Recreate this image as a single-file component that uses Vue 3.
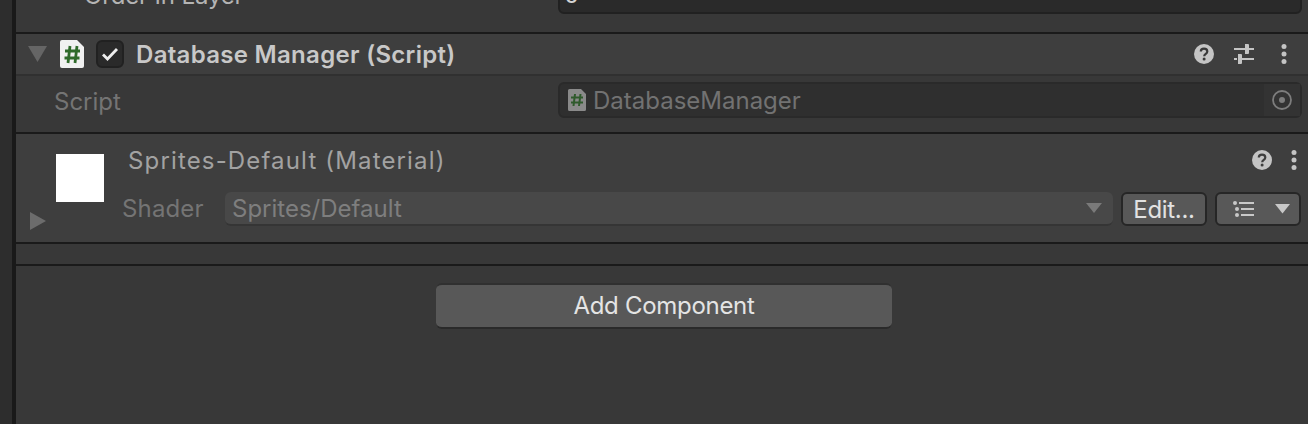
<template>
  <div class="inspector">
    <div class="gutter"></div>
    <div class="panel">
      <div class="clipped-row">
        <span class="clipped-label">Order In Layer</span>
        <div class="clipped-field"><span>0</span></div>
      </div>

      <div class="comp-header">
        <svg class="fold" width="20" height="18" viewBox="0 0 20 18"><path d="M0 1h19L9.500 17z" fill="#656565" /></svg>
        <svg class="script-icon" width="24" height="28" viewBox="0 0 24 28">
          <path d="M2 0h15l7 7v19a2 2 0 0 1-2 2H2a2 2 0 0 1-2-2V2a2 2 0 0 1 2-2z" fill="#f1f1f1" />
          <path d="M10 6 8 23M17 6l-2 17M5 11h15M4.500 18h15" stroke="#2f6a2a" stroke-width="2.800" fill="none" />
        </svg>
        <div class="check">
          <svg width="18" height="14" viewBox="0 0 18 14"><path d="M2 7.500 6.500 12 16 2" stroke="#eee" stroke-width="2.800" fill="none" /></svg>
        </div>
        <span class="comp-title">Database Manager (Script)</span>
        <div class="head-icons">
          <svg width="20" height="20" viewBox="0 0 20 20">
            <circle cx="10" cy="10" r="10" fill="#c4c4c4" />
            <path d="M6.800 7.600C6.800 5.800 8.200 4.700 10 4.700s3.300 1 3.300 2.800c0 2.300-3.100 2.300-3.100 4.700" stroke="#383838" stroke-width="2.200" fill="none" />
            <circle cx="10.100" cy="15" r="1.500" fill="#383838" />
          </svg>
          <svg class="sliders" width="20" height="20" viewBox="0 0 20 20" fill="#c4c4c4">
            <path d="M0 4h11v2H0zM15 4h5v2h-5zM11 0h3a1 1 0 0 1 1 1v8a1 1 0 0 1-1 1h-3z" />
            <path d="M0 14h3v2H0zM8 14h12v2H8zM4 10h3a1 1 0 0 1 1 1v8a1 1 0 0 1-1 1H4z" />
          </svg>
          <svg width="10" height="20" viewBox="0 0 10 20" fill="#c4c4c4">
            <circle cx="5" cy="2.500" r="2.500" />
            <circle cx="5" cy="10" r="2.500" />
            <circle cx="5" cy="17.500" r="2.500" />
          </svg>
        </div>
      </div>

      <div class="script-row">
        <span class="dim-label">Script</span>
        <div class="object-field">
          <svg width="18" height="22" viewBox="0 0 18 22">
            <path d="M1.500 0H13l5 5v15.500a1.500 1.500 0 0 1-1.500 1.500h-15A1.500 1.500 0 0 1 0 20.500v-19A1.500 1.500 0 0 1 1.500 0z" fill="#8a8a8a" />
            <path d="M7 5 5.500 17M12.500 5 11 17M3 8.500h12M3 13.500h12" stroke="#2f5a2c" stroke-width="2" fill="none" />
          </svg>
          <span class="object-name">DatabaseManager</span>
          <div class="picker">
            <svg width="20" height="20" viewBox="0 0 20 20">
              <circle cx="10" cy="10" r="9" stroke="#7d7d7d" stroke-width="1.800" fill="none" />
              <circle cx="10" cy="10" r="3" fill="#7d7d7d" />
            </svg>
          </div>
        </div>
      </div>

      <div class="material">
        <div class="preview-col">
          <div class="preview"></div>
          <svg class="mat-fold" width="16" height="18" viewBox="0 0 16 18"><path d="M0 0l16 9L0 18z" fill="#6c6c6c" /></svg>
        </div>
        <div class="mat-body">
          <div class="mat-title-row">
            <span class="mat-title">Sprites-Default (Material)</span>
            <div class="mat-icons">
              <svg width="20" height="20" viewBox="0 0 20 20">
                <circle cx="10" cy="10" r="10" fill="#c4c4c4" />
                <path d="M6.800 7.600C6.800 5.800 8.200 4.700 10 4.700s3.300 1 3.300 2.800c0 2.300-3.100 2.300-3.100 4.700" stroke="#3e3e3e" stroke-width="2.200" fill="none" />
                <circle cx="10.100" cy="15" r="1.500" fill="#3e3e3e" />
              </svg>
              <svg width="10" height="20" viewBox="0 0 10 20" fill="#c4c4c4">
                <circle cx="5" cy="2.500" r="2.500" />
                <circle cx="5" cy="10" r="2.500" />
                <circle cx="5" cy="17.500" r="2.500" />
              </svg>
            </div>
          </div>
          <div class="shader-row">
            <span class="dim-label shader-label">Shader</span>
            <div class="shader-select">
              <span>Sprites/Default</span>
              <svg width="16" height="10" viewBox="0 0 16 10"><path d="M0 0h16L8 10z" fill="#7a7a7a" /></svg>
            </div>
            <button class="small-btn edit-btn">Edit...</button>
            <button class="small-btn list-btn">
              <svg width="22" height="16" viewBox="0 0 22 16" fill="#c8c8c8">
                <circle cx="2" cy="2" r="2" />
                <circle cx="4" cy="8" r="2" />
                <circle cx="4" cy="14" r="2" />
                <path d="M6 1h15v2H6zM8 7h13v2H8zM8 13h13v2H8z" />
              </svg>
              <svg width="16" height="10" viewBox="0 0 16 10"><path d="M0 0h15L7.500 9.500z" fill="#c8c8c8" /></svg>
            </button>
          </div>
        </div>
      </div>

      <div class="spacer-row"></div>

      <div class="add-wrap">
        <button class="add-btn">Add Component</button>
      </div>
    </div>
  </div>
</template>

<script setup>
</script>

<style>
html, body {
  margin: 0;
  background: #383838;
}
</style>

<style scoped>
.inspector {
  display: flex;
  width: 1308px;
  height: 424px;
  overflow: hidden;
  font-family: Inter, "Liberation Sans", sans-serif;
  font-size: 24px;
  background: #383838;
}

.gutter {
  width: 12px;
  background: #2d2d2d;
  border-right: 4px solid #191919;
  flex: none;
}

.panel {
  flex: 1;
  display: flex;
  flex-direction: column;
  min-width: 0;
}

/* only the bottom of this row is on screen */
.clipped-row {
  height: 32px;
  flex: none;
  display: flex;
  align-items: flex-start;
  overflow: hidden;
  border-bottom: 2px solid #1a1a1a;
}

.clipped-label {
  margin: -18px 0 0 68px;
  color: #b4b4b4;
  line-height: 28px;
  letter-spacing: -0.15px;
}

.clipped-field {
  margin: -26px 6px 0 auto;
  width: 744px;
  height: 40px;
  background: #2a2a2a;
  border: 2px solid #212121;
  border-radius: 6px;
  box-sizing: border-box;
  color: #d2d2d2;
  padding-left: 4px;
  line-height: 38px;
}

.comp-header {
  height: 40px;
  flex: none;
  display: flex;
  align-items: center;
  background: #3e3e3e;
  border-bottom: 2px solid #303030;
}

.fold {
  margin-left: 12px;
}

.script-icon {
  margin-left: 12px;
}

.check {
  width: 28px;
  height: 28px;
  margin-left: 12px;
  box-sizing: border-box;
  background: #2a2a2a;
  border: 2px solid #212121;
  border-radius: 6px;
  display: flex;
  align-items: center;
  justify-content: center;
}

.comp-title {
  margin-left: 12px;
  font-weight: 600;
  color: #c8c8c8;
  letter-spacing: 0.3px;
}

.head-icons {
  margin-left: auto;
  margin-right: 19px;
  display: flex;
  align-items: center;
  gap: 25px;
}

.head-icons .sliders {
  margin-left: -5px;
}

.script-row {
  height: 56px;
  flex: none;
  display: flex;
  align-items: flex-start;
  border-bottom: 2px solid #1a1a1a;
}

.dim-label {
  color: #747474;
}

.script-row .dim-label {
  margin-left: 38px;
  line-height: 51px;
}

.object-field {
  width: 744px;
  height: 36px;
  margin: 6px 6px 0 auto;
  box-sizing: border-box;
  background: #2f2f2f;
  border: 2px solid #2a2a2a;
  border-radius: 6px;
  display: flex;
  align-items: center;
  padding-left: 8px;
}

.object-name {
  margin-left: 7px;
  color: #727272;
}

.picker {
  margin-left: auto;
  width: 36px;
  height: 100%;
  background: #333;
  display: flex;
  align-items: center;
  justify-content: center;
}

.material {
  height: 108px;
  flex: none;
  display: flex;
  background: #3e3e3e;
  border-bottom: 2px solid #1a1a1a;
}

.preview-col {
  width: 106px;
  flex: none;
}

.preview {
  width: 48px;
  height: 48px;
  background: #fff;
  margin: 20px 0 0 40px;
}

.mat-fold {
  display: block;
  margin: 10px 0 0 14px;
}

.mat-body {
  flex: 1;
  min-width: 0;
  display: flex;
  flex-direction: column;
}

.mat-title-row {
  height: 58px;
  display: flex;
  align-items: flex-start;
  padding-left: 6px;
}

.mat-title {
  color: #a2a2a2;
  line-height: 54px;
  letter-spacing: 1.15px;
}

.mat-icons {
  margin-left: auto;
  margin-right: 9px;
  margin-top: 16px;
  display: flex;
  gap: 17px;
}

.shader-row {
  display: flex;
  align-items: center;
  height: 34px;
}

.shader-label {
  width: 103px;
  flex: none;
  letter-spacing: 0.15px;
  padding-bottom: 2px;
}

.shader-select {
  width: 888px;
  height: 34px;
  box-sizing: border-box;
  background: #484848;
  border-radius: 6px;
  border-bottom: 2px solid #353535;
  display: flex;
  align-items: center;
  justify-content: space-between;
  padding: 0 11px 0 7px;
  color: #7e7e7e;
  flex: none;
}

.small-btn {
  height: 34px;
  box-sizing: border-box;
  background: #585858;
  border: 2px solid #262626;
  border-radius: 6px;
  font: inherit;
  padding: 0;
  flex: none;
}

.edit-btn {
  width: 86px;
  margin-left: 8px;
  color: #e2e2e2;
  letter-spacing: -0.3px;
}

.list-btn {
  width: 86px;
  margin-left: 8px;
  display: flex;
  align-items: center;
  padding-left: 16px;
  gap: 20px;
}

.spacer-row {
  height: 20px;
  flex: none;
  border-bottom: 2px solid #1a1a1a;
}

.add-wrap {
  display: flex;
  padding: 17px 0 0 420px;
}

.add-btn {
  width: 456px;
  height: 46px;
  background: #585858;
  border: none;
  border-top: 2px solid #303030;
  border-bottom: 2px solid #2a2a2a;
  border-radius: 6px;
  box-sizing: border-box;
  color: #e4e4e4;
  font: inherit;
  letter-spacing: -0.3px;
  padding: 0 0 2px;
}
</style>
